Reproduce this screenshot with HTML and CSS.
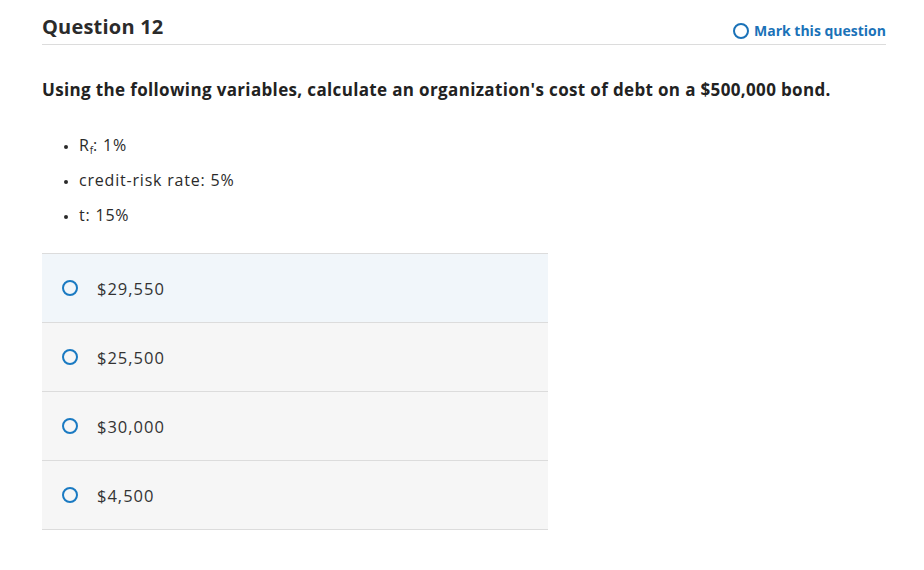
FILE: index.html
```html
<!DOCTYPE html>
<html>
<head>
<meta charset="utf-8">
<link rel="stylesheet" href="styles.css">
</head>
<body>
<div class="page">
  <div class="header">
    <h1 class="title">Question 12</h1>
    <a class="mark"><span class="mark-circle"></span>Mark this question</a>
  </div>
  <p class="prompt">Using the following variables, calculate an organization's cost of debt on a $500,000 bond.</p>
  <ul class="vars">
    <li>R<sub>f</sub>: 1%</li>
    <li>credit-risk rate: 5%</li>
    <li>t: 15%</li>
  </ul>
  <div class="options">
    <div class="option hover"><span class="radio"></span><span class="label">$29,550</span></div>
    <div class="option"><span class="radio"></span><span class="label">$25,500</span></div>
    <div class="option"><span class="radio"></span><span class="label">$30,000</span></div>
    <div class="option"><span class="radio"></span><span class="label">$4,500</span></div>
  </div>
</div>
</body>
</html>
```
FILE: styles.css
```css
html, body { margin: 0; padding: 0; background: #fff; }
body { font-family: "Open Sans", sans-serif; color: #222; }
.page { padding: 14px 38px 0 42px; }
.header {
  display: flex; justify-content: space-between; align-items: flex-end;
  border-bottom: 1px solid #dcdcdc; padding-bottom: 4px;
}
.title { margin: 0; font-size: 20px; font-weight: 700; color: #2b2b2b; line-height: 26px; letter-spacing: 0.2px; }
.mark {
  display: flex; align-items: center; gap: 5px;
  color: #1a72b8; font-weight: 700; font-size: 14px; line-height: 18px;
}
.mark-circle {
  width: 12px; height: 12px; border: 2px solid #1a72b8; border-radius: 50%;
}
.prompt { margin: 34px 0 0; font-size: 17px; font-weight: 700; color: #222; line-height: 22px; letter-spacing: 0.35px; }
.vars { margin: 34px 0 0; padding-left: 37px; font-size: 16px; color: #2a2a2a; letter-spacing: 0.8px; }
.vars li { line-height: 20px; margin-bottom: 15px; }
.vars li::marker { font-size: 11px; }
.vars sub { font-size: 10px; vertical-align: -3px; line-height: 0; letter-spacing: 0; }
.options { width: 506px; margin-top: 28px; border-top: 1px solid #dcdcdc; }
.option {
  display: flex; align-items: center; height: 68px;
  background: #f6f6f6; border-bottom: 1px solid #dcdcdc;
  padding-left: 20px;
}
.option.hover { background: #f1f6fa; }
.radio {
  width: 12px; height: 12px; border: 2.5px solid #1a7ac2; border-radius: 50%;
  margin-right: 19px;
}
.label { font-size: 16.5px; color: #333; letter-spacing: 1px; }
```
